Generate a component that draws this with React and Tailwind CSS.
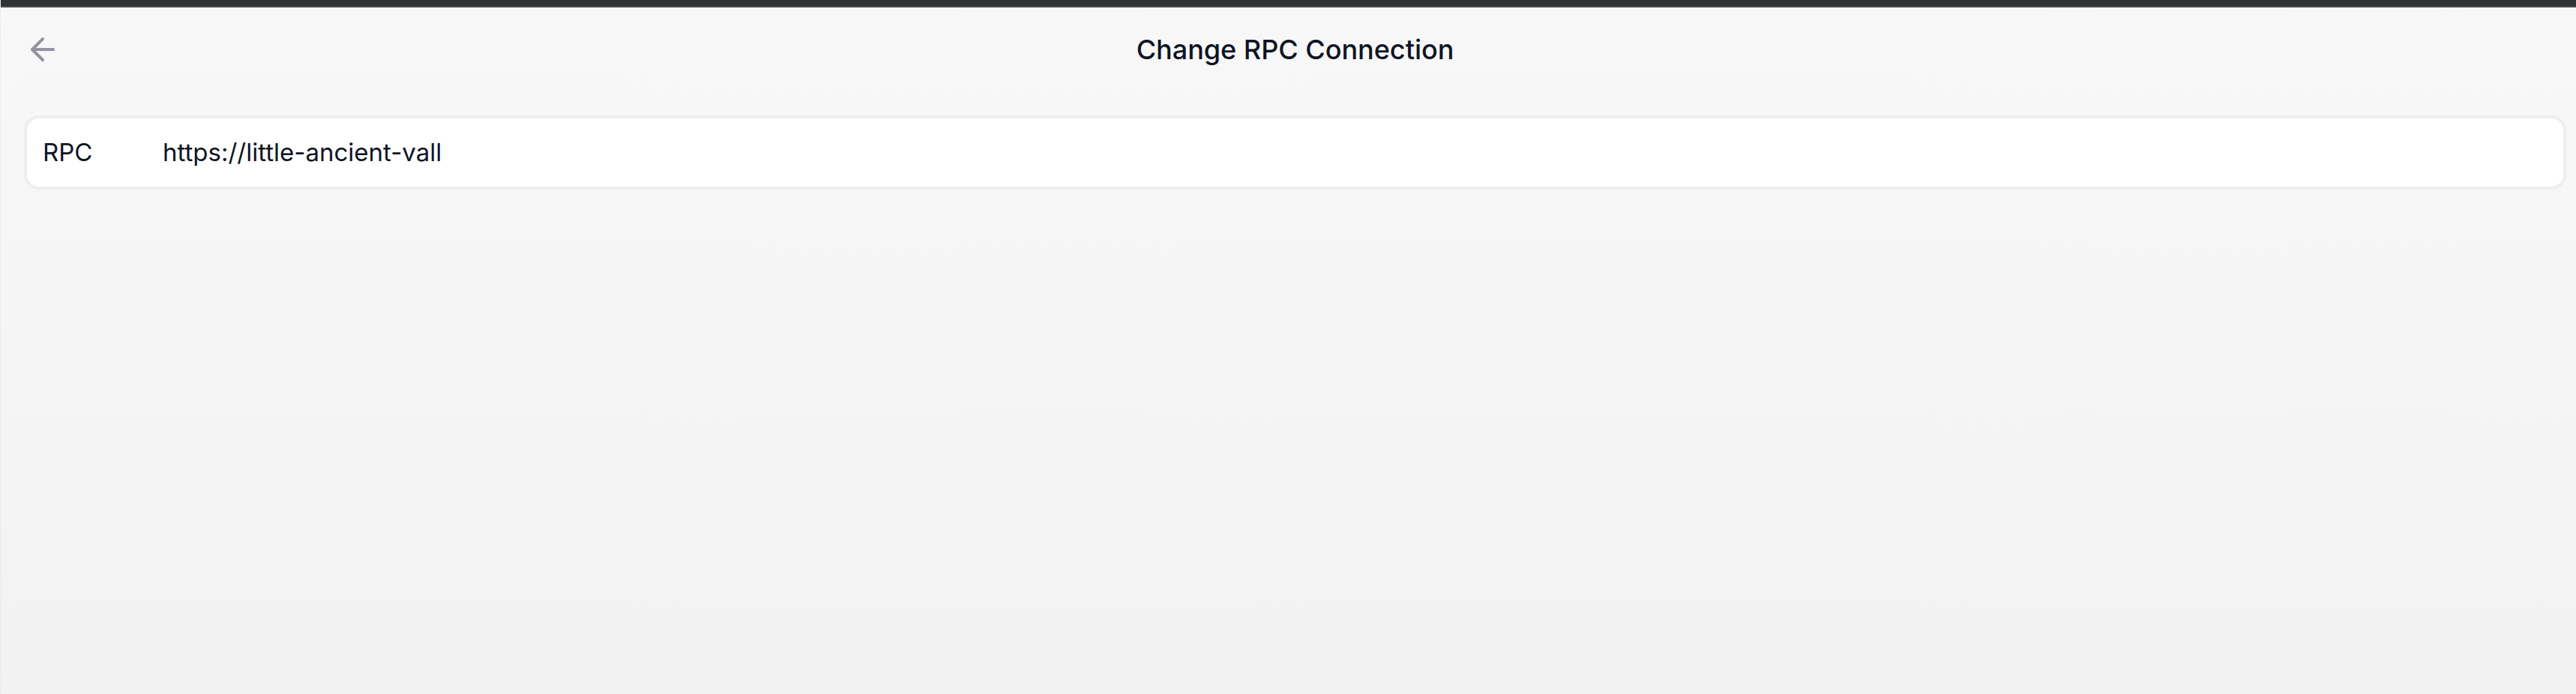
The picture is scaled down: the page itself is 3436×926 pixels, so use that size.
import React from "react";

const BackArrow = () => (
  <svg
    width="48"
    height="48"
    viewBox="0 0 24 24"
    fill="none"
    stroke="#93949f"
    strokeWidth="2"
    strokeLinecap="round"
    strokeLinejoin="round"
  >
    <path d="m12 19-7-7 7-7" />
    <path d="M19 12H5" />
  </svg>
);

export default function App() {
  return (
    <div
      className="w-full h-[926px] flex flex-col bg-gradient-to-b from-[#f8f8f8] to-[#f2f2f2] border-l border-[#ececec]"
      style={{ fontFamily: "Inter, 'Noto Sans', sans-serif" }}
    >
      {/* top bar */}
      <div className="h-[8px] bg-[#313236] shrink-0"></div>
      <div className="h-[2px] bg-[#4b4c51] shrink-0"></div>

      <div className="pl-[31px] pr-[13px] flex flex-col">
        {/* header */}
        <div className="h-[112px] flex items-center relative">
          <button className="w-[48px] h-[48px] flex items-center justify-center ml-[1px]">
            <BackArrow />
          </button>
          <h1 className="absolute left-0 right-0 text-center text-[36px] font-medium text-[#0f1424] pointer-events-none">
            Change RPC Connection
          </h1>
        </div>

        {/* rpc card */}
        <div className="mt-[32px] h-[99px] bg-white border-[4px] border-[#eeeef1] rounded-[20px] flex items-center px-[21px]">
          <span className="w-[160px] text-[33px] text-[#0f1424]">RPC</span>
          <span className="text-[33px] text-[#0f1424]">https://little-ancient-vall</span>
        </div>
      </div>
    </div>
  );
}
